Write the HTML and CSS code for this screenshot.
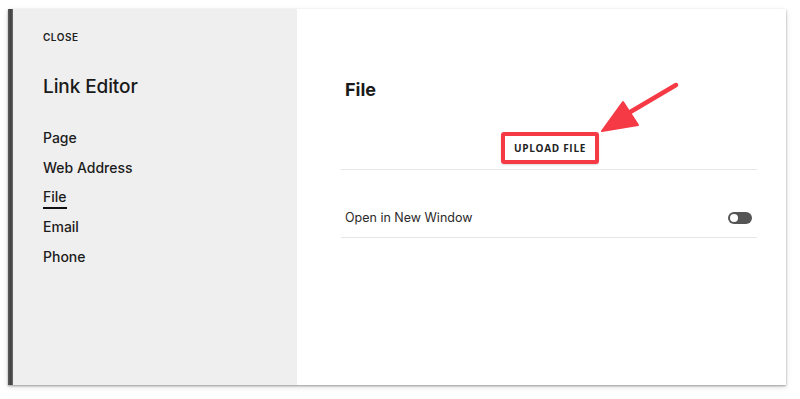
FILE: index.html
```html
<!DOCTYPE html>
<html>
<head>
<meta charset="utf-8">
<link rel="stylesheet" href="styles.css">
</head>
<body>
<div class="frame">
  <div class="edge"></div>
  <aside class="sidebar">
    <div class="close">CLOSE</div>
    <h1 class="title">Link Editor</h1>
    <nav class="menu">
      <div class="item">Page</div>
      <div class="item">Web Address</div>
      <div class="item active"><span>File</span></div>
      <div class="item">Email</div>
      <div class="item">Phone</div>
    </nav>
  </aside>
  <main class="panel">
    <h2 class="heading">File</h2>
    <div class="upload-row">
      <div class="upload">UPLOAD FILE</div>
    </div>
    <div class="option">
      <span>Open in New Window</span>
      <span class="toggle"><span class="knob"></span></span>
    </div>
    <svg class="arrow" width="120" height="80" viewBox="0 0 120 80">
      <line x1="96" y1="18" x2="35" y2="54" stroke="#f53a45" stroke-width="4.5" stroke-linecap="round"/>
      <polygon points="22,64 43,35 58,58" fill="#f53a45" stroke="#f53a45" stroke-width="2" stroke-linejoin="round"/>
    </svg>
  </main>
</div>
</body>
</html>
```

FILE: styles.css
```css
html, body {
  margin: 0;
  padding: 0;
  background: #ffffff;
}
body {
  width: 800px;
  height: 399px;
  overflow: hidden;
  font-family: "Inter", "Noto Sans", sans-serif;
  color: #1c1c1c;
}
.frame {
  margin: 9px 0 0 8px;
  width: 778px;
  height: 376px;
  display: flex;
  box-shadow: 0 1px 2px rgba(0,0,0,0.35), 0 2px 6px rgba(0,0,0,0.12);
}
.edge {
  width: 5px;
  background: linear-gradient(90deg, #5a5a5a 0%, #3f3f3f 60%, #707070 100%);
}
.sidebar {
  width: 284px;
  background: #efefef;
  padding: 22px 0 0 30px;
  box-sizing: border-box;
}
.close {
  font-size: 10px;
  font-weight: 600;
  letter-spacing: 0.5px;
  color: #222;
  line-height: 12px;
}
.title {
  margin: 32px 0 0 0;
  font-size: 19px;
  font-weight: 500;
  letter-spacing: -0.1px;
  line-height: 24px;
  color: #1a1a1a;
}
.menu {
  margin-top: 29px;
  display: flex;
  flex-direction: column;
}
.item {
  font-size: 14px;
  font-weight: 500;
  line-height: 20px;
  height: 29.7px;
  color: #1c1c1c;
}
.item.active span {
  display: inline-block;
  border-bottom: 2px solid #111;
  line-height: 18px;
  padding-bottom: 1px;
}
.panel {
  flex: 1;
  background: #fff;
  position: relative;
  padding: 0 29px 0 44px;
}
.heading {
  margin: 69px 0 0 4px;
  font-size: 18px;
  font-weight: 700;
  line-height: 24px;
  color: #1a1a1a;
}
.upload-row {
  margin-top: 30px;
  display: flex;
  justify-content: center;
  padding-bottom: 5px;
  border-bottom: 1px solid #e6e6e6;
  padding-left: 2px;
}
.upload {
  border: 4px solid #f53a45;
  border-radius: 3px;
  width: 90px;
  height: 24px;
  box-sizing: content-box;
  display: flex;
  align-items: center;
  justify-content: center;
  font-family: "Open Sans", "Noto Sans", sans-serif;
  font-size: 10px;
  font-weight: 700;
  letter-spacing: 0.7px;
  color: #222;
  box-shadow: 0 1px 2px rgba(0,0,0,0.15);
}
.option {
  display: flex;
  justify-content: space-between;
  align-items: center;
  height: 68px;
  box-sizing: border-box;
  padding: 28px 5px 0 4px;
  border-bottom: 1px solid #e6e6e6;
  font-size: 12.5px;
  color: #2a2a2a;
}
.toggle {
  width: 24px;
  height: 12px;
  border-radius: 6px;
  background: #555;
  display: flex;
  align-items: center;
  padding-left: 2px;
  box-sizing: border-box;
}
.knob {
  width: 8px;
  height: 8px;
  border-radius: 50%;
  background: #fff;
}
.arrow {
  position: absolute;
  left: 283px;
  top: 58px;
}
```
